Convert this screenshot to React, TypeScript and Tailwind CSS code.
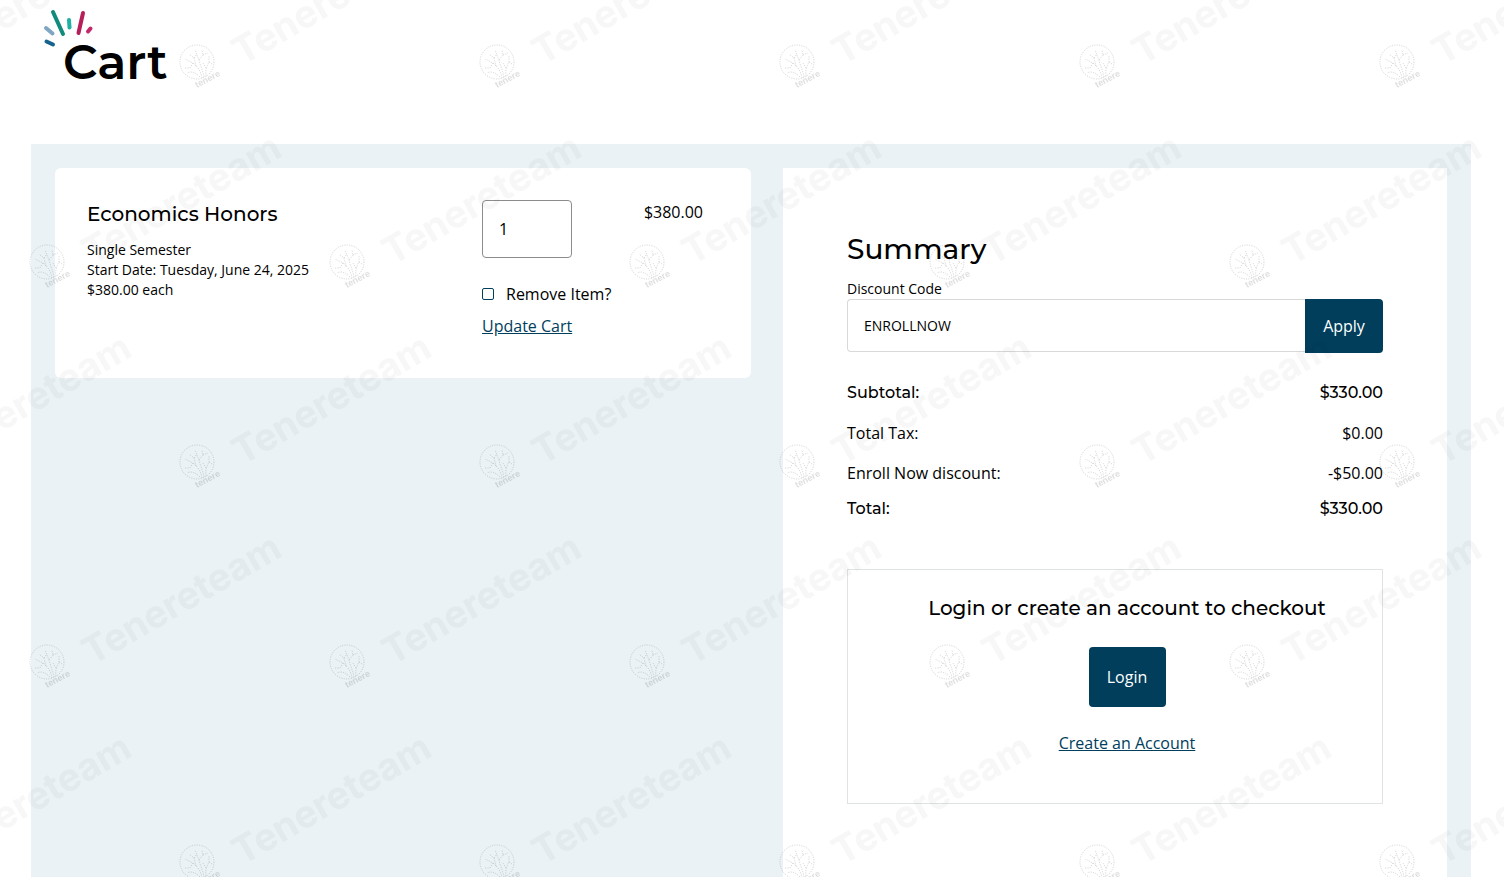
import { useState } from 'react';

const totals = [
  { label: 'Subtotal:', value: '$330.00', strong: true },
  { label: 'Total Tax:', value: '$0.00', strong: false },
  { label: 'Enroll Now discount:', value: '-$50.00', strong: false },
];

// One tile holds two marks, each repeated where it crosses the tile edge
const marks = [
  [197, 62],
  [-103, 62],
  [197, 462],
  [-103, 462],
  [47, 262],
  [347, 262],
  [-253, 262],
];

function Burst() {
  return (
    <svg
      aria-hidden="true"
      viewBox="0 0 52 40"
      className="h-10 w-[52px]"
      fill="none"
      strokeWidth="4"
      strokeLinecap="round"
    >
      <path d="M10 4 20 26" stroke="#128a7c" />
      <path d="M26 12 26.500 19.500" stroke="#1fb0a6" />
      <path d="M40 5 35.500 25" stroke="#b5205a" />
      <path d="M47.500 20.500 45 23.500" stroke="#c2286a" />
      <path d="M3 20 9.500 25.500" stroke="#7fa6c4" />
      <path d="M3.500 33.500 10 36.500" stroke="#16638f" />
    </svg>
  );
}

function Watermark() {
  return (
    <svg
      aria-hidden="true"
      className="pointer-events-none absolute inset-0 h-full w-full"
    >
      <defs>
        <g id="mark">
          <g
            fill="none"
            stroke="#000"
            strokeOpacity="0.16"
            strokeWidth="0.9"
            strokeDasharray="1.2 1.2"
          >
            <circle r="17" />
            <path d="M5 16C4 9 0 4-4 1L-12-3M-4 1-7 6-13 6M-1 4-3-4-8-8" />
            <path d="M7 15C6 9 3 3 2-2L-2-12M2-2 6-7 5-12M-3-4 0-8" />
            <path d="M9 14C8 8 10 4 12 0L12-6M9 6 6 1M12 0 15 2" />
            <path d="M3 15C-2 10-6 9-10 11M6-7 11-9" />
          </g>
          <text
            transform="translate(0 26) rotate(-28)"
            className="font-['Liberation_Sans',sans-serif] text-[9px] font-bold"
            fill="#000"
            fillOpacity="0.13"
          >
            tenere
          </text>
          <text
            transform="translate(45 4) rotate(-30)"
            className="font-['Inter',sans-serif] text-[38px] font-bold"
            fill="#000"
            fillOpacity="0.03"
          >
            Tenereteam
          </text>
        </g>
        <pattern
          id="marks"
          width="300"
          height="400"
          patternUnits="userSpaceOnUse"
        >
          {marks.map(([x, y]) => (
            <use key={`${x},${y}`} href="#mark" x={x} y={y} />
          ))}
        </pattern>
      </defs>
      <rect width="100%" height="100%" fill="url(#marks)" />
    </svg>
  );
}

function CartItem() {
  const [quantity, setQuantity] = useState('1');
  const [remove, setRemove] = useState(false);

  return (
    <section className="grid grid-cols-[5fr_2fr_1fr] rounded-md bg-white px-8 pt-8 pb-10">
      <div>
        <h2 className="font-['Montserrat',sans-serif] text-xl leading-7 font-medium">
          Economics Honors
        </h2>
        <div className="mt-3 text-sm leading-5">
          <p>Single Semester</p>
          <p>Start Date: Tuesday, June 24, 2025</p>
          <p>$380.00 each</p>
        </div>
      </div>

      <div>
        <input
          type="text"
          aria-label="Quantity"
          value={quantity}
          onChange={e => setQuantity(e.target.value)}
          className="block h-[58px] w-[90px] rounded border border-[#8c8c8c] px-4"
        />
        <label className="mt-6 flex items-center gap-3 leading-6 whitespace-nowrap">
          <input
            type="checkbox"
            checked={remove}
            onChange={e => setRemove(e.target.checked)}
            className="size-3 appearance-none rounded-xs border border-[#003e5c] checked:bg-[#003e5c]"
          />
          Remove Item?
        </label>
        <a
          href="#update"
          className="mt-2 inline-block leading-6 whitespace-nowrap text-[#003e5c] underline"
        >
          Update Cart
        </a>
      </div>

      <p className="pr-4 text-right leading-6">$380.00</p>
    </section>
  );
}

function Summary() {
  const [code, setCode] = useState('ENROLLNOW');

  return (
    <section className="ml-8 bg-white p-16">
      <h2 className="font-['Montserrat',sans-serif] text-[28px] leading-[35px] font-medium">
        Summary
      </h2>

      <form className="mt-3" onSubmit={e => e.preventDefault()}>
        <label htmlFor="discount" className="block text-sm leading-5">
          Discount Code
        </label>
        <div className="flex items-start">
          <input
            id="discount"
            type="text"
            value={code}
            onChange={e => setCode(e.target.value)}
            className="h-[53px] min-w-0 flex-1 rounded-l border border-r-0 border-[#d9d9d9] px-4 text-sm"
          />
          <button
            type="submit"
            className="h-[54px] w-[78px] rounded-r bg-[#003e5c] text-white"
          >
            Apply
          </button>
        </div>
      </form>

      <dl className="mt-7 leading-6">
        {totals.map(row => (
          <div
            key={row.label}
            className={
              row.strong
                ? "mb-4 flex justify-between font-['Montserrat',sans-serif] font-medium"
                : 'mb-4 flex justify-between last:mb-0'
            }
          >
            <dt>{row.label}</dt>
            <dd>{row.value}</dd>
          </div>
        ))}
      </dl>
      <dl className="mt-3 flex justify-between font-['Montserrat',sans-serif] leading-6 font-medium">
        <dt>Total:</dt>
        <dd>$330.00</dd>
      </dl>

      <div className="mt-12 flex flex-col items-center border border-[#e0e3e4] pt-6 pb-12 pl-6">
        <h3 className="font-['Montserrat',sans-serif] text-xl leading-[29px] font-medium whitespace-nowrap">
          Login or create an account to checkout
        </h3>
        <button
          type="button"
          className="mt-6 h-[60px] w-[77px] rounded bg-[#003e5c] text-white"
        >
          Login
        </button>
        <a href="#register" className="mt-6 leading-6 text-[#003e5c] underline">
          Create an Account
        </a>
      </div>
    </section>
  );
}

export default function App() {
  return (
    <div className="relative flex min-h-screen flex-col overflow-hidden bg-white font-['Open_Sans',sans-serif] text-base text-black">
      <header className="h-36 pt-2 pl-[43px]">
        <Burst />
        <h1 className="-mt-4 pl-5 font-['Montserrat',sans-serif] text-5xl leading-[60px] font-semibold">
          Cart
        </h1>
      </header>

      <main className="mr-[33px] ml-[31px] grid flex-1 grid-cols-2 bg-[#eaf2f6] px-6 pt-6">
        <div>
          <CartItem />
        </div>
        <Summary />
      </main>

      <Watermark />
    </div>
  );
}
